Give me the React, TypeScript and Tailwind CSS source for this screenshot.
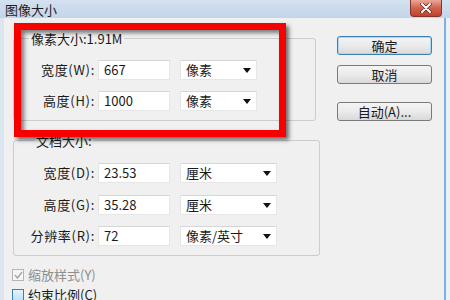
import React from "react";

function Arrow() {
  return (
    <svg width="8" height="5" viewBox="0 0 8 5" className="shrink-0">
      <path d="M0 0h8L4 5z" fill="#111" />
    </svg>
  );
}

interface RowProps {
  label: string;
  value: string;
  unit: string;
  unitClass: string;
  className?: string;
}

function Row({ label, value, unit, unitClass, className }: RowProps) {
  return (
    <div className={`flex items-center h-[20px] ${className ?? ""}`}>
      <div className="w-[81px] text-right whitespace-nowrap tracking-[0.7px]">{label}</div>
      <div className="ml-[3px] w-[72px] h-[20px] bg-white border border-[#e6e6e6] border-t-[#d6d6d6] pl-[5px] flex items-center">
        {value}
      </div>
      <div
        className={`ml-[10px] h-[20px] bg-white border border-[#e6e6e6] border-t-[#d6d6d6] pl-[5px] pr-[5px] flex items-center justify-between ${unitClass}`}
      >
        <span>{unit}</span>
        <Arrow />
      </div>
    </div>
  );
}

function DialogButton({
  label,
  primary,
  className,
}: {
  label: string;
  primary?: boolean;
  className?: string;
}) {
  return (
    <div
      className={`w-[95px] h-[19px] rounded-[3px] flex items-center justify-center text-[#1a1a1a] bg-linear-to-b from-[#f4f4f4] via-[#ebebeb] to-[#d9d9d9] ${
        primary
          ? "border border-[#3c7fb1] shadow-[inset_0_0_0_1px_#a8d8f5]"
          : "border border-[#7a7a7a]"
      } ${className ?? ""}`}
    >
      {label}
    </div>
  );
}

export default function App() {
  return (
    <div className="w-[450px] h-[300px] overflow-hidden relative flex flex-col bg-[#f0f0f0] text-[13px] leading-[18px] text-[#1a1a1a] font-['Noto_Sans_CJK_SC',sans-serif]">
      {/* Title bar */}
      <div className="h-[18px] flex items-start justify-between bg-linear-to-b from-[#d3e1f0] to-[#c4d5e9]">
        <span className="ml-[5px] mt-[1px] text-[#1e1e1e]">图像大小</span>
        <div className="mr-[8px] w-[32px] h-[17px] rounded-b-[4px] border border-t-0 border-[#83342a] bg-linear-to-b from-[#e8a898] via-[#d0624c] to-[#c3402a] flex items-center justify-center">
          <svg width="12" height="10" viewBox="0 0 12 10">
            <path d="M2 1l8 8M10 1l-8 8" stroke="#5a2a22" strokeWidth="3.5" strokeLinecap="round" />
            <path d="M2 1l8 8M10 1l-8 8" stroke="#fff" strokeWidth="2" strokeLinecap="round" />
          </svg>
        </div>
      </div>
      <div className="h-[2px] bg-[#e4ecf5]" />

      <div className="flex-1 flex">
        {/* left frame */}
        <div className="w-[4px] bg-[#dce6f1]" />

        {/* client */}
        <div className="flex-1 flex pl-[8px]">
          <div className="w-[308px] flex flex-col">
            {/* group 1 */}
            <div className="ml-[1px] mt-[20px] w-[303px] border border-[#c9cdd1] rounded-[3px] pb-[9px]">
              <div className="-mt-[9px] ml-[15px] px-[2px] w-fit bg-[#f0f0f0] whitespace-nowrap">
                像素大小:1.91M
              </div>
              <Row className="mt-[12px]" label="宽度(W):" value="667" unit="像素" unitClass="w-[77px]" />
              <Row className="mt-[11px]" label="高度(H):" value="1000" unit="像素" unitClass="w-[77px]" />
            </div>

            {/* group 2 */}
            <div className="ml-[1px] mt-[19px] w-[307px] border border-[#c9cdd1] rounded-[3px] pb-[9px]">
              <div className="-mt-[9px] ml-[20px] px-[2px] w-fit bg-[#f0f0f0] whitespace-nowrap">
                文档大小:
              </div>
              <Row className="mt-[13px]" label="宽度(D):" value="23.53" unit="厘米" unitClass="w-[97px]" />
              <Row className="mt-[12px]" label="高度(G):" value="35.28" unit="厘米" unitClass="w-[97px]" />
              <Row className="mt-[11px]" label="分辨率(R):" value="72" unit="像素/英寸" unitClass="w-[97px]" />
            </div>

            {/* checkboxes */}
            <div className="mt-[10px] h-[18px] flex items-center text-[#8e8e8e]">
              <div className="w-[12px] h-[12px] border border-[#b5b5b5] bg-[#f6f6f6] flex items-center justify-center">
                <svg width="9" height="8" viewBox="0 0 9 8">
                  <path d="M1 4l2.5 3L8 1" stroke="#a3a3a3" strokeWidth="1.4" fill="none" />
                </svg>
              </div>
              <span className="ml-[4px]">缩放样式(Y)</span>
            </div>
            <div className="mt-[2px] h-[18px] flex items-center">
              <div className="w-[12px] h-[12px] border border-[#3c7fb1] bg-linear-to-b from-[#e6f4fc] to-[#bfe1f6]" />
              <span className="ml-[4px]">约束比例(C)</span>
            </div>
          </div>

          {/* buttons */}
          <div className="ml-[17px] pt-[18px] flex flex-col">
            <DialogButton label="确定" primary />
            <DialogButton label="取消" className="mt-[10px]" />
            <DialogButton label="自动(A)..." className="mt-[18px]" />
          </div>
        </div>

        {/* right frame */}
        <div className="w-[2px] bg-[#7eb0dc]" />
        <div className="w-[4px] bg-[#e9f1f9]" />
      </div>

      {/* red highlight */}
      <div className="absolute left-[14px] top-[23px] w-[272px] h-[114px] border-[7px] border-[#f60000] shadow-[3px_3px_4px_rgba(0,0,0,0.55),inset_3px_3px_4px_rgba(0,0,0,0.5)]" />
    </div>
  );
}
